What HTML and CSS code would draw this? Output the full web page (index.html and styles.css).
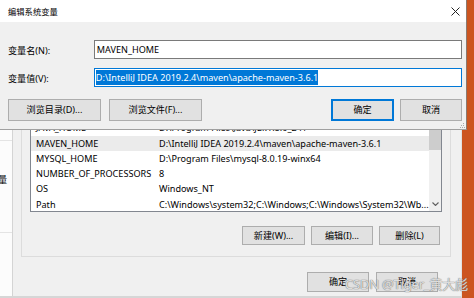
FILE: index.html
```html
<!DOCTYPE html>
<html lang="zh-CN">
<head>
    <meta charset="UTF-8">
    <title>编辑系统变量</title>
    <link rel="stylesheet" href="styles.css">
</head>
<body>

    <div class="desktop">

        <!-- Environment variables window (behind) -->
        <div class="window back">
            <div class="side">
                <div class="side-item tall"></div>
                <div class="side-item"><span>环境变量</span></div>
                <div class="side-item"></div>
            </div>
            <div class="main">
                <div class="groupbox">
                    <div class="list">
                        <div class="rows">
                            <div class="row"><span class="name">DriverData</span><span class="value">C:\Windows\System32\Drivers\DriverData</span></div>
                            <div class="row"><span class="name">JAVA_HOME</span><span class="value">D:\Program Files\Java\jdk1.8.0_241</span></div>
                            <div class="row selected"><span class="name">MAVEN_HOME</span><span class="value">D:\IntelliJ IDEA 2019.2.4\maven\apache-maven-3.6.1</span></div>
                            <div class="row"><span class="name">MYSQL_HOME</span><span class="value">D:\Program Files\mysql-8.0.19-winx64</span></div>
                            <div class="row"><span class="name">NUMBER_OF_PROCESSORS</span><span class="value">8</span></div>
                            <div class="row"><span class="name">OS</span><span class="value">Windows_NT</span></div>
                            <div class="row"><span class="name">Path</span><span class="value">C:\Windows\system32;C:\Windows;C:\Windows\System32\Wb...</span></div>
                        </div>
                        <div class="scrollbar">
                            <div class="thumb"></div>
                            <svg class="arrow" width="7" height="4" viewBox="0 0 7 4"><path d="M0.5 0.5 L3.5 3.5 L6.5 0.5" fill="none" stroke="#606060" stroke-width="1.1"/></svg>
                        </div>
                    </div>
                    <div class="btn-row">
                        <button class="btn w63">新建(W)...</button>
                        <button class="btn w62">编辑(I)...</button>
                        <button class="btn w61">删除(L)</button>
                    </div>
                </div>
                <div class="footer">
                    <button class="btn w62 tall">确定</button>
                    <button class="btn w62 tall">取消</button>
                </div>
            </div>
        </div>

        <!-- Edit system variable dialog (front) -->
        <div class="window dialog">
            <div class="titlebar">
                <span>编辑系统变量</span>
                <svg width="9" height="9" viewBox="0 0 9 9"><path d="M0.5 0.5 L8.5 8.5 M8.5 0.5 L0.5 8.5" stroke="#222" stroke-width="1"/></svg>
            </div>
            <div class="dialog-body">
                <div class="field-row">
                    <label>变量名(N):</label>
                    <div class="input">MAVEN_HOME</div>
                </div>
                <div class="field-row second">
                    <label>变量值(V):</label>
                    <div class="input focused"><span class="sel">D:\IntelliJ IDEA 2019.2.4\maven\apache-maven-3.6.1</span></div>
                </div>
                <div class="dialog-buttons">
                    <button class="btn w93 big">浏览目录(D)...</button>
                    <button class="btn w93 big">浏览文件(F)...</button>
                    <span class="spacer"></span>
                    <button class="btn w63 big default">确定</button>
                    <button class="btn w62 big">取消</button>
                </div>
            </div>
            <svg class="grip" width="5" height="5" viewBox="0 0 5 5"><rect x="3" y="0" width="1" height="1" fill="#aaa"/><rect x="1" y="2" width="1" height="1" fill="#aaa"/><rect x="3" y="2" width="1" height="1" fill="#aaa"/><rect x="0" y="4" width="1" height="1" fill="#aaa"/><rect x="2" y="4" width="1" height="1" fill="#aaa"/><rect x="4" y="4" width="1" height="1" fill="#aaa"/></svg>
        </div>

        <div class="watermark">CSDN @Tiger_黄大彪</div>
    </div>

</body>
</html>
```

FILE: styles.css
```css
body {
    margin: 0;
    font-family: "Noto Sans", "Noto Sans CJK SC", sans-serif;
    font-size: 9.1px;
    color: #000;
}
.desktop {
    position: relative;
    width: 474px;
    height: 298px;
    overflow: hidden;
    background: #cc5520;
}
.window {
    position: absolute;
    left: 0;
    top: 0;
    box-sizing: border-box;
    background: #f0f0f0;
}

/* back window */
.back {
    width: 462px;
    height: 298px;
    display: flex;
    border-right: 1px solid #e2e2e2;
    border-bottom: 2px solid #d6d6d6;
}
.side {
    width: 12px;
    background: #fcfcfc;
    border-right: 1px solid #d4d4d4;
    display: flex;
    flex-direction: column;
    overflow: hidden;
}
.side-item {
    height: 91px;
    flex-shrink: 0;
    border-bottom: 1px solid #e4e4e4;
    display: flex;
    justify-content: flex-end;
    align-items: flex-start;
    overflow: hidden;
    white-space: nowrap;
    font-family: "Noto Sans CJK SC", sans-serif;
}
.side-item span {
    margin: 31px 5px 0 0;
}
.side-item.tall {
    height: 140px;
}
.main {
    padding: 100px 0 0 8px;
}
.groupbox {
    width: 430px;
    box-sizing: border-box;
    border: 1px solid #dcdcdc;
    padding: 3px 8px 11px 8px;
}
.list {
    height: 108px;
    box-sizing: border-box;
    border: 1px solid #828790;
    background: #fff;
    display: flex;
}
.rows {
    flex: 1;
    overflow: hidden;
}
.row {
    height: 15.25px;
    display: flex;
    align-items: center;
    white-space: nowrap;
    line-height: 15px;
}
.row.selected {
    background: #ebebeb;
}
.name {
    width: 123px;
    padding-left: 5px;
    flex-shrink: 0;
}
.scrollbar {
    width: 12px;
    background: #f0f0f0;
    display: flex;
    flex-direction: column;
    align-items: center;
}
.thumb {
    width: 12px;
    height: 45px;
    background: #cdcdcd;
}
.arrow {
    margin-top: auto;
    margin-bottom: 5px;
}
.btn-row {
    display: flex;
    justify-content: flex-end;
    gap: 6px;
    margin: 14px 2px 0 0;
}
.footer {
    display: flex;
    justify-content: flex-end;
    gap: 7px;
    width: 430px;
    padding-right: 13px;
    box-sizing: border-box;
    margin-top: 15px;
}

/* buttons */
.btn {
    height: 19px;
    box-sizing: border-box;
    padding: 0;
    border: 1px solid #adadad;
    background: #e1e1e1;
    font-family: "Noto Sans", "Noto Sans CJK SC", sans-serif;
    font-size: 9.1px;
    line-height: 16px;
    color: #000;
}
.btn.tall {
    height: 20px;
}
.btn.big {
    height: 22px;
}
.btn.default {
    border: 2px solid #0078d7;
}
.w93 { width: 93px; }
.w63 { width: 63px; }
.w62 { width: 62px; }
.w61 { width: 61px; }

/* front dialog */
.dialog {
    width: 467px;
    height: 130px;
    border-right: 1px solid #8a7a70;
    border-bottom: 1px solid #a0a0a0;
}
.titlebar {
    height: 22px;
    background: #fff;
    display: flex;
    align-items: center;
    justify-content: space-between;
    padding: 0 6px 0 8px;
    font-family: "Noto Sans CJK SC", sans-serif;
    font-size: 8.3px;
}
.dialog-body {
    padding: 18px 4px 0 8px;
}
.field-row {
    display: flex;
    align-items: center;
}
.field-row.second {
    margin-top: 9px;
}
.field-row label {
    width: 86px;
}
.input {
    width: 369px;
    height: 19px;
    box-sizing: border-box;
    border: 1px solid #7a7a7a;
    background: #fff;
    padding: 0 2px;
    line-height: 17px;
    white-space: nowrap;
}
.input.focused {
    border-color: #0078d7;
    padding-left: 1px;
}
.sel {
    background: #0078d7;
    color: #fff;
    padding: 1px 0;
}
.dialog-buttons {
    display: flex;
    gap: 8px;
    margin-top: 12px;
}
.spacer {
    flex: 1;
}
.dialog-buttons .btn.default {
    margin-right: -2px;
}
.grip {
    position: absolute;
    right: 1px;
    bottom: 1px;
}
.watermark {
    position: absolute;
    left: 345px;
    top: 274px;
    font-size: 13px;
    letter-spacing: -0.2px;
    color: rgba(236, 236, 236, 0.9);
    text-shadow: 0 0 1px #777, 0 0 1px #777;
    white-space: nowrap;
    font-family: "Noto Sans", "Noto Sans CJK SC", sans-serif;
}
```
